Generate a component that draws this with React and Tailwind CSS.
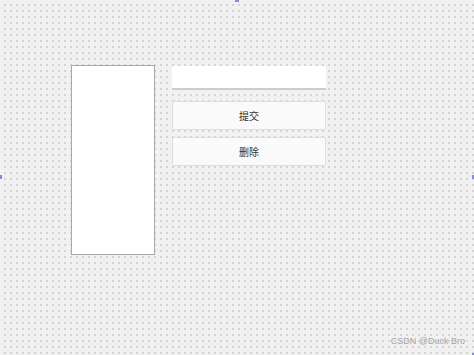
export default function App() {
  return (
    <div
      className="relative w-[474px] h-[355px] overflow-hidden bg-[#f1f1f1] bg-[radial-gradient(circle,#d2d2d2_0.7px,transparent_0.8px)] bg-[size:6px_6px] bg-[position:2px_2px]"
      style={{ fontFamily: '"Noto Sans CJK SC", "Liberation Sans", sans-serif' }}
    >
      <div className="flex pl-[71px] pt-[65px]">
        {/* list widget */}
        <div className="w-[84px] h-[190px] bg-white border border-[#a8a8a8]" />

        <div className="ml-[17px] w-[154px] flex flex-col">
          {/* line edit */}
          <div className="h-[24px] mt-px bg-white border-b-2 border-[#cccccc]" />
          <button className="mt-[11px] h-[29px] bg-[#fafafa] border border-[#dedede] rounded-[2px] text-[10px] text-[#333] flex items-center justify-center">
            提交
          </button>
          <button className="mt-[7px] h-[29px] bg-[#fafafa] border border-[#dedede] rounded-[2px] text-[10px] text-[#333] flex items-center justify-center">
            删除
          </button>
        </div>
      </div>

      {/* selection handles */}
      <div className="absolute top-0 left-[235px] w-[4px] h-[2px] bg-[#8a8ad8]" />
      <div className="absolute top-[175px] left-0 w-[2px] h-[4px] bg-[#8a8ad8]" />
      <div className="absolute top-[175px] right-0 w-[2px] h-[4px] bg-[#8a8ad8]" />
      <div className="absolute bottom-0 right-0 w-[2px] h-[2px] bg-[#8a8ad8]" />

      <div
        className="absolute right-[9px] bottom-[9px] text-[9px] leading-none text-[#a4a4a4]"
        style={{ fontFamily: '"Liberation Sans", sans-serif' }}
      >
        CSDN @Duck Bro
      </div>
    </div>
  );
}
